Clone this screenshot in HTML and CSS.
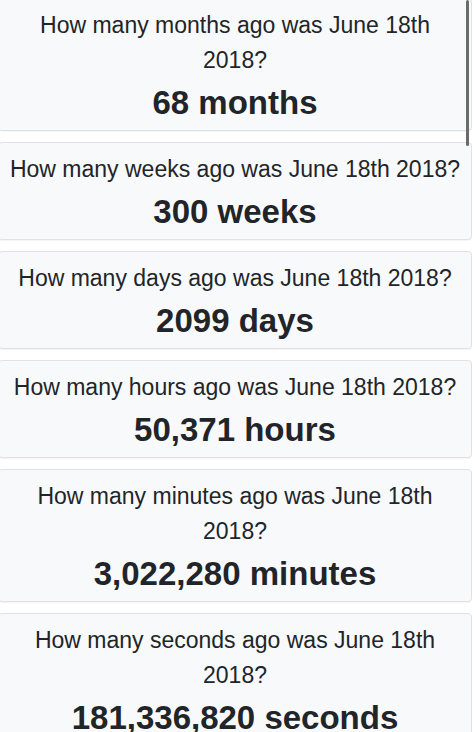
FILE: index.html
```html
<!DOCTYPE html>
<html lang="en">
<head>
<meta charset="utf-8">
<title>How long ago was June 18th 2018?</title>
<link rel="stylesheet" href="styles.css">
</head>
<body>
<div class="list">
  <div class="card">
    <p class="question">How many months ago was June 18th 2018?</p>
    <p class="answer">68 months</p>
  </div>
  <div class="card">
    <p class="question">How many weeks ago was June 18th 2018?</p>
    <p class="answer">300 weeks</p>
  </div>
  <div class="card">
    <p class="question">How many days ago was June 18th 2018?</p>
    <p class="answer">2099 days</p>
  </div>
  <div class="card">
    <p class="question">How many hours ago was June 18th 2018?</p>
    <p class="answer">50,371 hours</p>
  </div>
  <div class="card">
    <p class="question">How many minutes ago was June 18th 2018?</p>
    <p class="answer">3,022,280 minutes</p>
  </div>
  <div class="card">
    <p class="question">How many seconds ago was June 18th 2018?</p>
    <p class="answer">181,336,820 seconds</p>
  </div>
</div>
<div class="scrollbar"></div>
</body>
</html>
```
FILE: styles.css
```css
html, body {
  margin: 0;
  padding: 0;
  background: #ffffff;
  overflow: hidden;
}
body {
  font-family: "Liberation Sans", Arial, Helvetica, sans-serif;
  color: #212529;
  width: 474px;
  height: 732px;
  position: relative;
}
.list {
  display: flex;
  flex-direction: column;
  gap: 11px;
  margin-top: -2px;
  margin-left: -2px;
  width: 474px;
}
.card {
  background: #f8f9fa;
  border: 1px solid #dfe1e4;
  border-radius: 4px;
  padding: 9px 8px 7px;
  text-align: center;
  box-shadow: 0 1px 1px rgba(0,0,0,0.04);
}
.question {
  margin: 0;
  font-size: 23px;
  line-height: 35px;
}
.answer {
  margin: 5px 0 0;
  font-size: 33px;
  line-height: 40px;
  font-weight: bold;
}
.scrollbar {
  position: absolute;
  top: 0;
  left: 466px;
  width: 3px;
  height: 146px;
  background: #6b6b6b;
  border-radius: 2px;
}
```
